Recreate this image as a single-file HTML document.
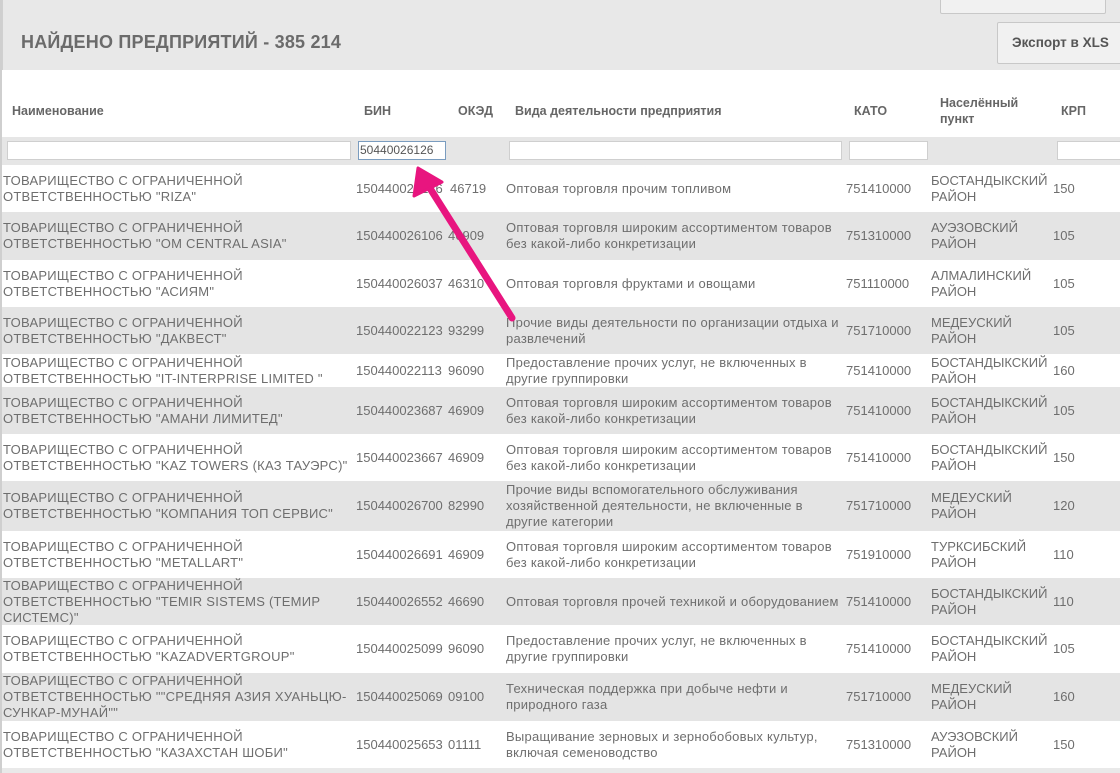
<!DOCTYPE html>
<html><head><meta charset="utf-8"><style>
*{margin:0;padding:0;box-sizing:border-box}
body{width:1120px;height:773px;overflow:hidden;background:#e9e9e9;font-family:"Liberation Sans",Arial,sans-serif;color:#6a6a6a;position:relative}
.top{position:absolute;left:0;top:0;width:1120px;height:70px;background:#e8e8e8;border-left:3px solid #d0d0d0}
h1{position:absolute;left:21px;top:32px;font-size:18px;font-weight:bold;color:#6b6b6b;letter-spacing:0.2px}
.btn{position:absolute;left:997px;top:22px;width:130px;height:42px;border:1px solid #c8c8c8;background:#f1f1f1;border-radius:2px;font-size:13.5px;font-weight:bold;color:#555;padding:12px 0 0 14px}
.btn0{position:absolute;left:940px;top:-6px;width:166px;height:20px;border:1px solid #c8c8c8;background:#f1f1f1;border-radius:2px}
.hdr{position:absolute;left:2px;top:70px;width:1118px;height:67px;background:#fff}
.hdr div{position:absolute;font-size:12.5px;font-weight:bold;color:#666;line-height:16px}
.flt{position:absolute;left:2px;top:137px;width:1118px;height:28px;background:#e6e6e6}
.flt i{position:absolute;top:4px;height:19px;background:#fff;border:1px solid #cfcfcf}
.r{position:absolute;left:2px;width:1118px}
.r.g{background:#e4e4e4}.r.w{background:#fff}
.c{position:absolute;top:0;height:100%;display:flex;align-items:center;font-size:13px;line-height:16px;white-space:nowrap;color:#6e6e6e}
.n{left:1px;letter-spacing:0.25px}.b{left:354px}.o{left:446px}.a{left:504px;letter-spacing:0.25px}.k{left:844px}.l{left:929px}.p{left:1051px}
.lb{position:absolute;left:0;top:0;width:2px;height:773px;background:#cfcfcf}
</style></head><body>
<div class="top"></div>
<div class="btn0"></div>
<h1>НАЙДЕНО ПРЕДПРИЯТИЙ - 385 214</h1>
<div class="btn">Экспорт в XLS</div>
<div class="hdr">
<div style="left:10px;top:33px">Наименование</div>
<div style="left:362px;top:33px">БИН</div>
<div style="left:456px;top:33px">ОКЭД</div>
<div style="left:513px;top:33px">Вида деятельности предприятия</div>
<div style="left:852px;top:33px">КАТО</div>
<div style="left:938px;top:25px">Населённый<br>пункт</div>
<div style="left:1059px;top:33px">КРП</div>
</div>
<div class="flt">
<i style="left:5px;width:344px"></i>
<i style="left:356px;width:88px;border-color:#7a9cbf;font-size:12px;color:#555;font-style:normal;padding:1px 0 0 1px">50440026126</i>
<i style="left:507px;width:333px"></i>
<i style="left:847px;width:79px"></i>
<i style="left:1055px;width:65px"></i>
</div>

<div class="r w" style="top:165px;height:47px"><div class="c n">ТОВАРИЩЕСТВО С ОГРАНИЧЕННОЙ<br>ОТВЕТСТВЕННОСТЬЮ "RIZA"</div><div class="c b">150440026126</div><div class="c o" style="left:448px">46719</div><div class="c a">Оптовая торговля прочим топливом</div><div class="c k">751410000</div><div class="c l">БОСТАНДЫКСКИЙ<br>РАЙОН</div><div class="c p">150</div></div>
<div class="r g" style="top:212px;height:48px"><div class="c n">ТОВАРИЩЕСТВО С ОГРАНИЧЕННОЙ<br>ОТВЕТСТВЕННОСТЬЮ "OM CENTRAL ASIA"</div><div class="c b">150440026106</div><div class="c o">46909</div><div class="c a">Оптовая торговля широким ассортиментом товаров<br>без какой-либо конкретизации</div><div class="c k">751310000</div><div class="c l">АУЭЗОВСКИЙ<br>РАЙОН</div><div class="c p">105</div></div>
<div class="r w" style="top:260px;height:47px"><div class="c n">ТОВАРИЩЕСТВО С ОГРАНИЧЕННОЙ<br>ОТВЕТСТВЕННОСТЬЮ "АСИЯМ"</div><div class="c b">150440026037</div><div class="c o">46310</div><div class="c a">Оптовая торговля фруктами и овощами</div><div class="c k">751110000</div><div class="c l">АЛМАЛИНСКИЙ<br>РАЙОН</div><div class="c p">105</div></div>
<div class="r g" style="top:307px;height:47px"><div class="c n">ТОВАРИЩЕСТВО С ОГРАНИЧЕННОЙ<br>ОТВЕТСТВЕННОСТЬЮ "ДАКВЕСТ"</div><div class="c b">150440022123</div><div class="c o">93299</div><div class="c a">Прочие виды деятельности по организации отдыха и<br>развлечений</div><div class="c k">751710000</div><div class="c l">МЕДЕУСКИЙ<br>РАЙОН</div><div class="c p">105</div></div>
<div class="r w" style="top:354px;height:33px"><div class="c n">ТОВАРИЩЕСТВО С ОГРАНИЧЕННОЙ<br>ОТВЕТСТВЕННОСТЬЮ "IT-INTERPRISE LIMITED "</div><div class="c b">150440022113</div><div class="c o">96090</div><div class="c a">Предоставление прочих услуг, не включенных в<br>другие группировки</div><div class="c k">751410000</div><div class="c l">БОСТАНДЫКСКИЙ<br>РАЙОН</div><div class="c p">160</div></div>
<div class="r g" style="top:387px;height:47px"><div class="c n">ТОВАРИЩЕСТВО С ОГРАНИЧЕННОЙ<br>ОТВЕТСТВЕННОСТЬЮ "АМАНИ ЛИМИТЕД"</div><div class="c b">150440023687</div><div class="c o">46909</div><div class="c a">Оптовая торговля широким ассортиментом товаров<br>без какой-либо конкретизации</div><div class="c k">751410000</div><div class="c l">БОСТАНДЫКСКИЙ<br>РАЙОН</div><div class="c p">105</div></div>
<div class="r w" style="top:434px;height:47px"><div class="c n">ТОВАРИЩЕСТВО С ОГРАНИЧЕННОЙ<br>ОТВЕТСТВЕННОСТЬЮ "KAZ TOWERS (КАЗ ТАУЭРС)"</div><div class="c b">150440023667</div><div class="c o">46909</div><div class="c a">Оптовая торговля широким ассортиментом товаров<br>без какой-либо конкретизации</div><div class="c k">751410000</div><div class="c l">БОСТАНДЫКСКИЙ<br>РАЙОН</div><div class="c p">150</div></div>
<div class="r g" style="top:481px;height:50px"><div class="c n">ТОВАРИЩЕСТВО С ОГРАНИЧЕННОЙ<br>ОТВЕТСТВЕННОСТЬЮ "КОМПАНИЯ ТОП СЕРВИС"</div><div class="c b">150440026700</div><div class="c o">82990</div><div class="c a">Прочие виды вспомогательного обслуживания<br>хозяйственной деятельности, не включенные в<br>другие категории</div><div class="c k">751710000</div><div class="c l">МЕДЕУСКИЙ<br>РАЙОН</div><div class="c p">120</div></div>
<div class="r w" style="top:531px;height:47px"><div class="c n">ТОВАРИЩЕСТВО С ОГРАНИЧЕННОЙ<br>ОТВЕТСТВЕННОСТЬЮ "METALLART"</div><div class="c b">150440026691</div><div class="c o">46909</div><div class="c a">Оптовая торговля широким ассортиментом товаров<br>без какой-либо конкретизации</div><div class="c k">751910000</div><div class="c l">ТУРКСИБСКИЙ<br>РАЙОН</div><div class="c p">110</div></div>
<div class="r g" style="top:578px;height:47px"><div class="c n">ТОВАРИЩЕСТВО С ОГРАНИЧЕННОЙ<br>ОТВЕТСТВЕННОСТЬЮ "TEMIR SISTEMS (ТЕМИР<br>СИСТЕМС)"</div><div class="c b">150440026552</div><div class="c o">46690</div><div class="c a">Оптовая торговля прочей техникой и оборудованием</div><div class="c k">751410000</div><div class="c l">БОСТАНДЫКСКИЙ<br>РАЙОН</div><div class="c p">110</div></div>
<div class="r w" style="top:625px;height:48px"><div class="c n">ТОВАРИЩЕСТВО С ОГРАНИЧЕННОЙ<br>ОТВЕТСТВЕННОСТЬЮ "KAZADVERTGROUP"</div><div class="c b">150440025099</div><div class="c o">96090</div><div class="c a">Предоставление прочих услуг, не включенных в<br>другие группировки</div><div class="c k">751410000</div><div class="c l">БОСТАНДЫКСКИЙ<br>РАЙОН</div><div class="c p">105</div></div>
<div class="r g" style="top:673px;height:48px"><div class="c n">ТОВАРИЩЕСТВО С ОГРАНИЧЕННОЙ<br>ОТВЕТСТВЕННОСТЬЮ ""СРЕДНЯЯ АЗИЯ ХУАНЬЦЮ-<br>СУНКАР-МУНАЙ""</div><div class="c b">150440025069</div><div class="c o">09100</div><div class="c a">Техническая поддержка при добыче нефти и<br>природного газа</div><div class="c k">751710000</div><div class="c l">МЕДЕУСКИЙ<br>РАЙОН</div><div class="c p">160</div></div>
<div class="r w" style="top:721px;height:47px"><div class="c n">ТОВАРИЩЕСТВО С ОГРАНИЧЕННОЙ<br>ОТВЕТСТВЕННОСТЬЮ "КАЗАХСТАН ШОБИ"</div><div class="c b">150440025653</div><div class="c o">01111</div><div class="c a">Выращивание зерновых и зернобобовых культур,<br>включая семеноводство</div><div class="c k">751310000</div><div class="c l">АУЭЗОВСКИЙ<br>РАЙОН</div><div class="c p">150</div></div>
<div class="lb"></div>
<svg style="position:absolute;left:0;top:0" width="1120" height="773">
<line x1="512" y1="318" x2="426" y2="182" stroke="#e8157f" stroke-width="7" stroke-linecap="round"/>
<polygon points="418,168 414,196 442,182" fill="#e8157f" stroke="#e8157f" stroke-width="3" stroke-linejoin="round"/>
</svg>
</body></html>
